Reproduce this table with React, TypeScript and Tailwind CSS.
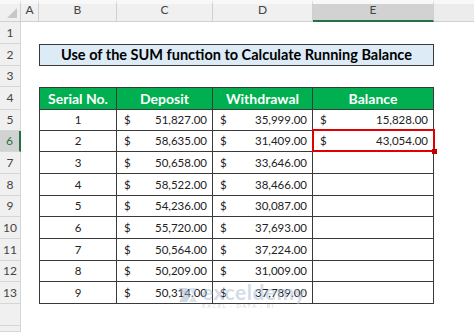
import React from 'react';

const rows = [
  ['1', '51,827.00', '35,999.00', '15,828.00'],
  ['2', '58,635.00', '31,409.00', '43,054.00'],
  ['3', '50,658.00', '33,646.00', ''],
  ['4', '58,522.00', '38,466.00', ''],
  ['5', '54,236.00', '30,087.00', ''],
  ['6', '55,720.00', '37,693.00', ''],
  ['7', '50,564.00', '37,224.00', ''],
  ['8', '50,209.00', '31,009.00', ''],
  ['9', '50,314.00', '37,789.00', ''],
];

const line = 'border-[#3a3a3a]';

function RowHead({ n, active }: { n?: string; active?: boolean }) {
  return (
    <div
      className={
        'flex items-center justify-center border-b border-r border-[#d6d6d6] text-[12px] ' +
        (active ? 'bg-[#d2d2d2] text-[#217346] border-r-2 border-r-[#217346]' : 'bg-[#f0f0f0] text-[#444]')
      }
    >
      {n}
    </div>
  );
}

function Blank() {
  return <div />;
}

function Money({ value }: { value: string }) {
  return (
    <div className={'flex items-center justify-between border-b border-r px-[7px] pr-[5px] ' + line}>
      {value && <span>$</span>}
      <span>{value}</span>
    </div>
  );
}

export default function App() {
  return (
    <div
      className="relative h-[332px] w-[474px] overflow-hidden bg-white text-[11.5px] text-[#222]"
      style={{ fontFamily: 'Lato, "Open Sans", sans-serif' }}
    >
      <div className="grid h-full grid-cols-[21px_18px_78px_96px_100px_121px_1fr] grid-rows-[22px_22px_22px_21px_23px_21px_21px_22px_22px_21px_22px_22px_21px_22px_22px_1fr]">
        {/* column headers */}
        <div className="relative border-b border-r border-t-[4px] border-[#d0d0d0] border-t-[#f8f8f8] bg-[#f0f0f0]">
          <div className="absolute bottom-[3px] right-[3px] h-0 w-0 border-b-[10px] border-l-[10px] border-b-[#c8c8c8] border-l-transparent" />
        </div>
        {['A', 'B', 'C', 'D'].map((c) => (
          <div key={c} className="flex items-end justify-center border-b border-r border-t-[4px] border-[#d0d0d0] border-t-[#f8f8f8] bg-[#f0f0f0] pb-[2px] text-[12px] text-[#444]">
            {c}
          </div>
        ))}
        <div className="flex items-end justify-center border-b-2 border-r border-t-[4px] border-b-[#217346] border-r-[#d0d0d0] border-t-[#f8f8f8] bg-[#d2d2d2] pb-[1px] text-[12px] text-[#444]">
          E
        </div>
        <div className="border-b border-t-[4px] border-[#d0d0d0] border-t-[#f8f8f8] bg-[#ececec]" />

        {/* row 1 */}
        <RowHead n="1" />
        {[0, 1, 2, 3, 4, 5].map((i) => <Blank key={i} />)}

        {/* row 2: title */}
        <RowHead n="2" />
        <Blank />
        <div className="col-span-4 flex items-center justify-center border border-[#3a3a3a] bg-[#ddebf7] text-[14.5px] font-bold text-black">
          Use of the SUM function to Calculate Running Balance
        </div>
        <Blank />

        {/* row 3 */}
        <RowHead n="3" />
        {[0, 1, 2, 3, 4, 5].map((i) => <Blank key={i} />)}

        {/* row 4: table header */}
        <RowHead n="4" />
        <Blank />
        {['Serial No.', 'Deposit', 'Withdrawal', 'Balance'].map((h, i) => (
          <div
            key={h}
            className={
              'flex items-center justify-center border-b border-r border-t bg-[#00b050] text-[14px] font-bold text-white ' +
              line +
              (i === 0 ? ' border-l' : '')
            }
          >
            {h}
          </div>
        ))}
        <Blank />

        {/* data rows */}
        {rows.map((r, idx) => (
          <React.Fragment key={r[0]}>
            <RowHead n={String(idx + 5)} active={idx === 1} />
            <Blank />
            <div className={'flex items-center justify-center border-b border-l border-r ' + line}>{r[0]}</div>
            <Money value={r[1]} />
            <Money value={r[2]} />
            {idx === 1 ? (
              <div className={'relative flex items-center justify-between border-b border-r px-[7px] pr-[5px] ' + line}>
                <span>$</span>
                <span>{r[3]}</span>
                <div className="absolute -left-[1px] -top-[2px] h-[23px] w-[123px] border-2 border-[#e00000]" />
                <div className="absolute -bottom-[3px] -right-[4px] h-[5px] w-[5px] bg-[#c00000]" />
              </div>
            ) : (
              <Money value={r[3]} />
            )}
            <Blank />
          </React.Fragment>
        ))}

        {/* row 14 + rest */}
        <RowHead />
        {[0, 1, 2, 3, 4, 5].map((i) => <Blank key={i} />)}
        <RowHead />
        {[0, 1, 2, 3, 4, 5].map((i) => <Blank key={i} />)}
      </div>

      {/* watermark */}
      <div className="pointer-events-none absolute left-[177px] top-[281px] flex items-center gap-[3px] opacity-50">
        <svg width="22" height="18" viewBox="0 0 22 18">
          <path d="M2 2 L10 2 L14 9 L10 16 L2 16 L6 9 Z" fill="#9fb3cc" />
          <path d="M12 2 L20 2 L16 9 Z" fill="#b8c8db" />
          <path d="M16 9 L20 16 L12 16 Z" fill="#b8c8db" />
        </svg>
        <div className="flex flex-col leading-none">
          <span className="text-[21px] font-bold tracking-[0.5px] text-[#a9bbd2]">exceldemy</span>
          <span className="mt-[1px] text-[6px] tracking-[1.5px] text-[#aab4c2]">EXCEL · DATA · BI</span>
        </div>
      </div>
    </div>
  );
}
